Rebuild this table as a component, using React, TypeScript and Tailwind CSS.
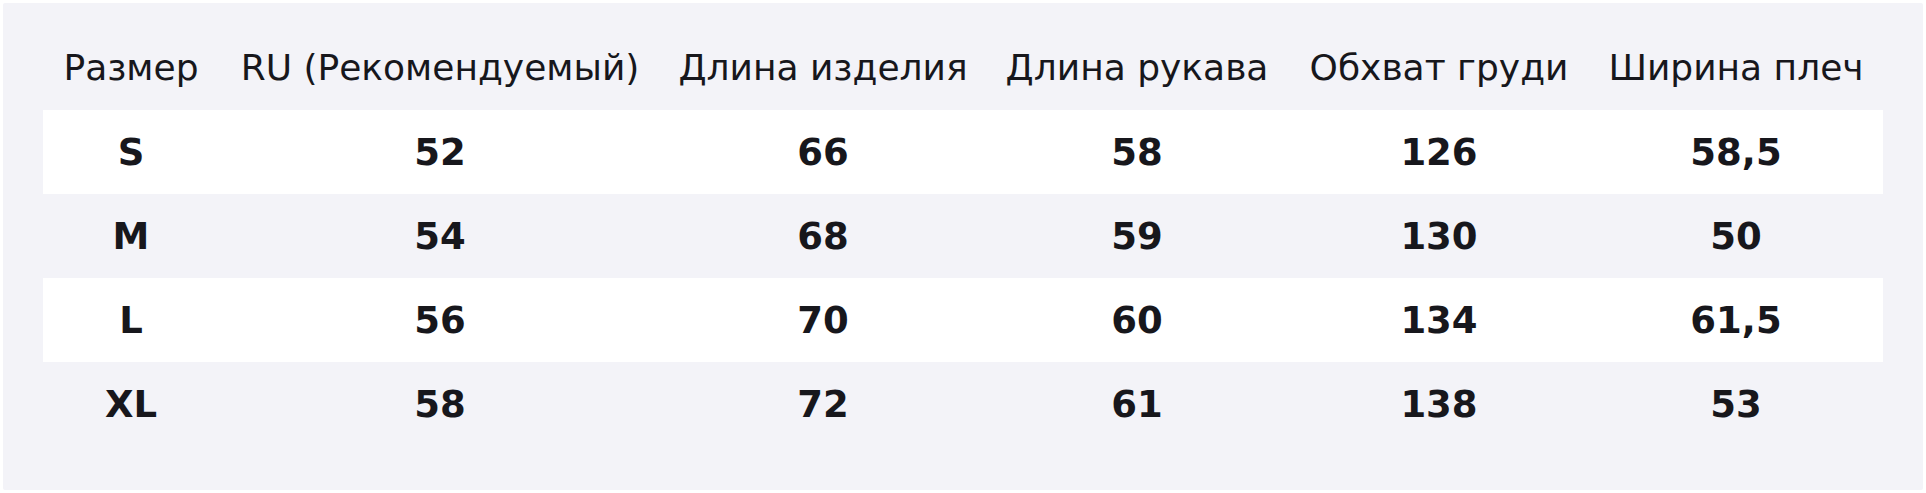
const headers = [
  "Размер",
  "RU (Рекомендуемый)",
  "Длина изделия",
  "Длина рукава",
  "Обхват груди",
  "Ширина плеч",
];

const rows = [
  ["S", "52", "66", "58", "126", "58,5"],
  ["M", "54", "68", "59", "130", "50"],
  ["L", "56", "70", "60", "134", "61,5"],
  ["XL", "58", "72", "61", "138", "53"],
];

const widths = ["w-[176px]", "w-[442px]", "w-[324px]", "w-[304px]", "w-[300px]", "w-[294px]"];

export default function App() {
  return (
    <div className="w-[1926px] h-[493px] bg-white p-[3px] font-['DejaVu_Sans',sans-serif]">
      <div className="h-[487px] bg-[#f3f3f8] rounded-[2px] px-10 pt-10">
        <table className="w-[1840px] table-fixed border-collapse text-[#17171c]">
          <colgroup>
            {widths.map(w => (
              <col key={w} className={w} />
            ))}
          </colgroup>
          <thead>
            <tr className="h-[67px]">
              {headers.map(h => (
                <th
                  key={h}
                  className="text-center align-top pt-[5px] text-[36px] font-normal leading-[40px] whitespace-nowrap"
                >
                  {h}
                </th>
              ))}
            </tr>
          </thead>
          <tbody>
            {rows.map((r, i) => (
              <tr key={r[0]} className={`h-[84px] ${i % 2 === 0 ? "bg-white" : "bg-transparent"}`}>
                {r.map((c, j) => (
                  <td key={j} className="text-center align-middle pt-[2px] text-[37px] font-bold leading-[40px]">
                    {c}
                  </td>
                ))}
              </tr>
            ))}
          </tbody>
        </table>
      </div>
    </div>
  );
}
